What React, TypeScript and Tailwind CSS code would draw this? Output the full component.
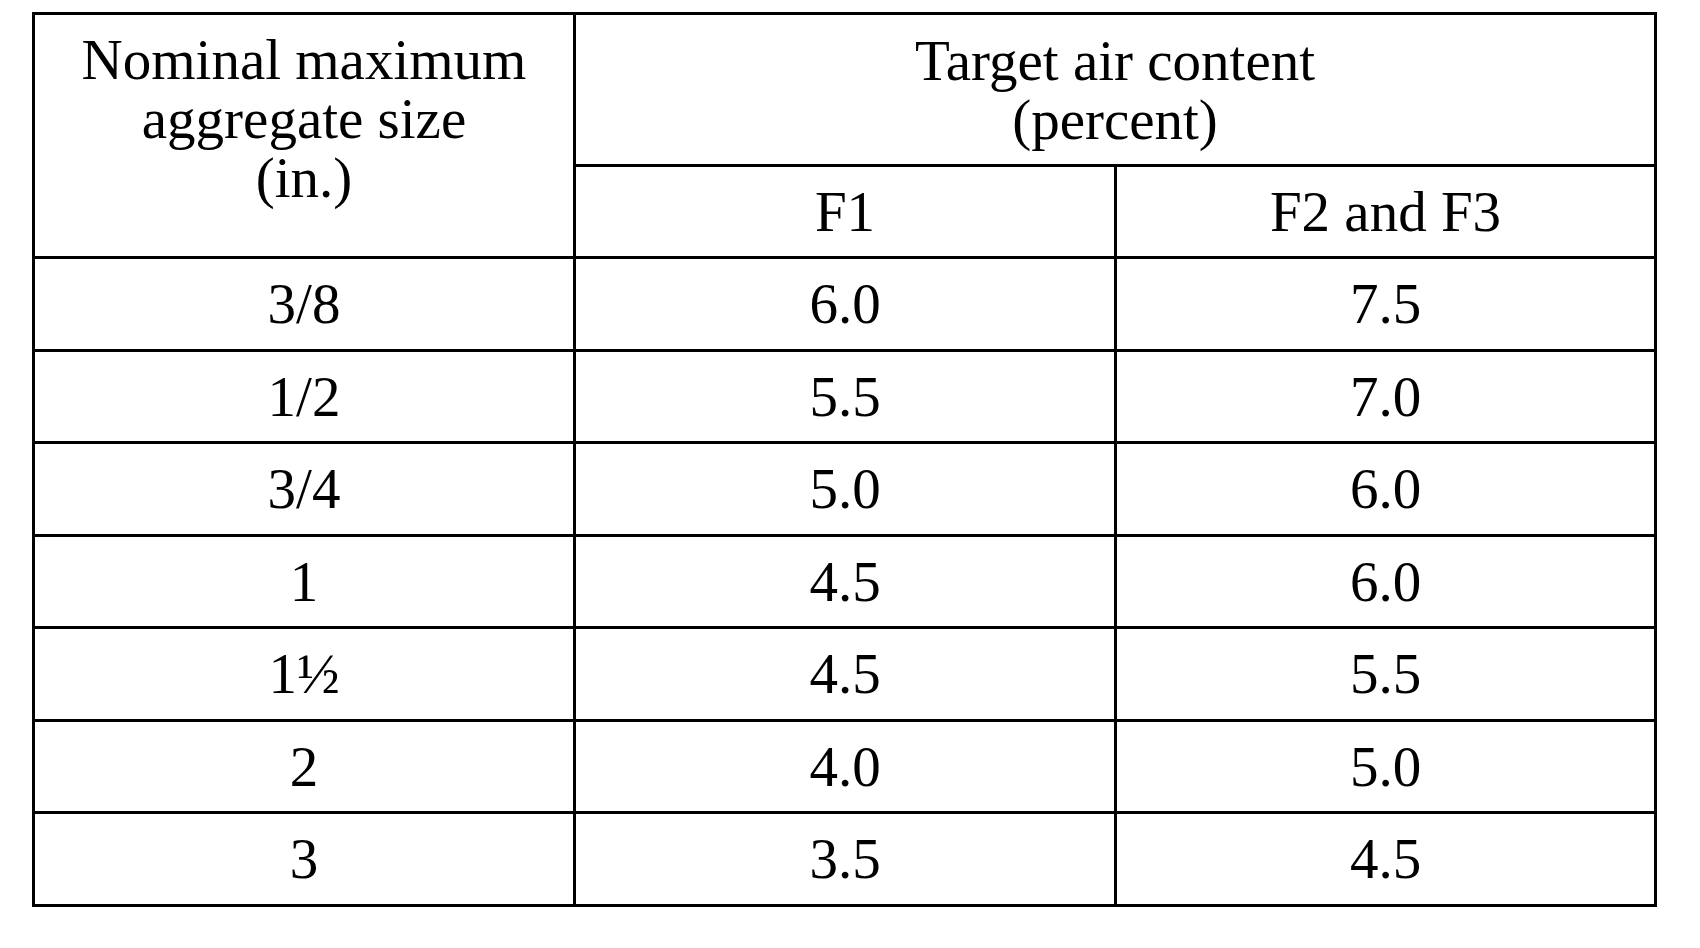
import React from 'react';

const rows: [string, string, string][] = [
  ['3/8', '6.0', '7.5'],
  ['1/2', '5.5', '7.0'],
  ['3/4', '5.0', '6.0'],
  ['1', '4.5', '6.0'],
  ['1½', '4.5', '5.5'],
  ['2', '4.0', '5.0'],
  ['3', '3.5', '4.5'],
];

export default function App() {
  return (
    <div className="min-h-[948px] w-[1700px] bg-white pl-[32px] pt-[12px] font-['Liberation_Serif',_'Times_New_Roman',_serif] text-[57px] leading-[59px] text-black">
      <div className="grid w-[1625px] grid-cols-[538px_538px_537px] grid-rows-[149px_89px_repeat(7,89.5px)] gap-[3px] bg-black p-[3px]">
        <div className="row-span-2 bg-white pt-[15px] text-center">
          Nominal maximum
          <br />
          aggregate size
          <br />
          (in.)
        </div>
        <div className="col-span-2 flex flex-col items-center justify-center bg-white text-center">
          <span>Target air content</span>
          <span>(percent)</span>
        </div>
        <div className="flex items-center justify-center bg-white">F1</div>
        <div className="flex items-center justify-center bg-white">F2 and F3</div>
        {rows.map(([size, f1, f23]) => (
          <React.Fragment key={size}>
            <div className="flex items-center justify-center bg-white">{size}</div>
            <div className="flex items-center justify-center bg-white">{f1}</div>
            <div className="flex items-center justify-center bg-white">{f23}</div>
          </React.Fragment>
        ))}
      </div>
    </div>
  );
}
